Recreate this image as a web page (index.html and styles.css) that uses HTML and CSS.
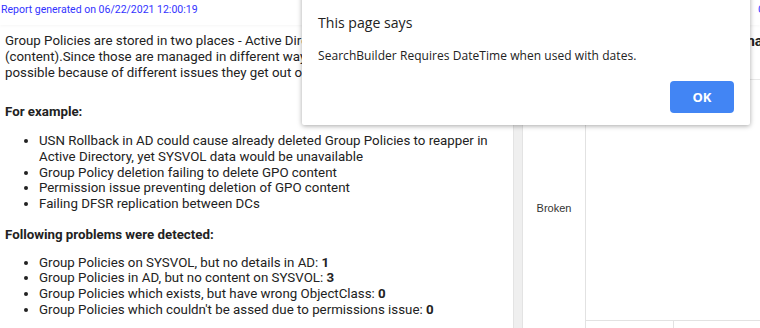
FILE: index.html
```html
<!DOCTYPE html>
<html lang="en">
<head>
  <meta charset="UTF-8">
  <title>GPO Broken Report</title>
  <link rel="stylesheet" href="styles.css">
</head>
<body>
  <div class="topbar">
    <span class="report">Report generated on 06/22/2021 12:00:19</span>
    <span class="report">Contact</span>
  </div>

  <div class="main">
    <section class="panel left">
      <p class="intro">
        Group Policies are stored in two places - Active Directory (metadata) and SYSVOL
        (content).Since those are managed in different ways, replicated in different ways it's
        possible because of different issues they get out of sync.
      </p>
      <p class="label">For example:</p>
      <ul>
        <li>USN Rollback in AD could cause already deleted Group Policies to reapper in Active Directory, yet SYSVOL data would be unavailable</li>
        <li>Group Policy deletion failing to delete GPO content</li>
        <li>Permission issue preventing deletion of GPO content</li>
        <li>Failing DFSR replication between DCs</li>
      </ul>
      <p class="label second">Following problems were detected:</p>
      <ul>
        <li>Group Policies on SYSVOL, but no details in AD: <b>1</b></li>
        <li>Group Policies in AD, but no content on SYSVOL: <b>3</b></li>
        <li>Group Policies which exists, but have wrong ObjectClass: <b>0</b></li>
        <li>Group Policies which couldn't be assed due to permissions issue: <b>0</b></li>
      </ul>
    </section>

    <div class="splitter"></div>

    <section class="panel right">
      <h2 class="card-title">Group Policy Analysis</h2>
      <div class="grid">
        <div class="cell status">Broken</div>
        <div class="cell chart"></div>
        <div class="cell blank"></div>
        <div class="cell foot"></div>
        <div class="cell foot"></div>
      </div>
    </section>
  </div>

  <div class="dialog">
    <div class="dialog-title">This page says</div>
    <div class="dialog-text">SearchBuilder Requires DateTime when used with dates.</div>
    <div class="dialog-actions">
      <button type="button">OK</button>
    </div>
  </div>
</body>
</html>
```

FILE: styles.css
```css
html, body {
  overflow: hidden;
}
body {
  margin: 0;
  width: 760px;
  height: 328px;
  font-family: Roboto, 'Liberation Sans', sans-serif;
  color: #222;
  background: #fff;
}
.topbar {
  display: grid;
  grid-template-columns: 757px 1fr;
  height: 25px;
  box-shadow: 0 1px 3px rgba(0, 0, 0, 0.04);
  position: relative;
}
.report {
  font-size: 10.5px;
  line-height: 20px;
  color: #3333ff;
  padding-left: 1px;
  white-space: nowrap;
}
.main {
  display: flex;
  margin-top: 2px;
  height: 301px;
}
.panel {
  background: #fff;
  overflow: hidden;
}
.left {
  width: 513px;
  padding: 6px 0 0 5px;
  box-sizing: border-box;
  font-size: 13.3px;
  line-height: 15.75px;
}
.left p {
  margin: 0;
}
.intro {
  width: 500px;
}
.left .label {
  font-weight: bold;
  margin-top: 24px;
}
.left .label.second {
  margin-top: 15px;
}
.left ul {
  margin: 13px 0 0;
  padding-left: 34px;
}
.left .second + ul {
  margin-top: 12px;
}
.splitter {
  width: 10px;
  background: #efefef;
  border-left: 1px solid #e3e3e3;
  border-right: 1px solid #e3e3e3;
  box-sizing: border-box;
}
.right {
  flex: 1;
  display: flex;
  flex-direction: column;
}
.card-title {
  margin: 0;
  padding: 5px 0 0 124px;
  height: 53px;
  box-sizing: border-box;
  font-size: 15px;
  line-height: 18px;
  white-space: nowrap;
  border-bottom: 1px solid #e8e8e8;
}
.grid {
  display: grid;
  grid-template-columns: 62px 88px 1fr;
  grid-template-rows: 241px 1fr;
  flex: 1;
}
.cell {
  font-family: Arial, 'Liberation Sans', sans-serif;
  font-size: 11px;
  color: #333;
}
.status {
  display: flex;
  align-items: center;
  justify-content: center;
  padding-top: 14px;
}
.chart {
  grid-column: 2 / 4;
  border-left: 1px solid #e2e2e2;
  border-bottom: 1px solid #e2e2e2;
}
.foot {
  border-left: 1px solid #e2e2e2;
}
.dialog {
  position: absolute;
  left: 302px;
  top: -8px;
  width: 448px;
  height: 133px;
  box-sizing: border-box;
  padding: 20px 16px 0 16px;
  background: #fff;
  border-radius: 2px;
  box-shadow: 0 1px 5px rgba(0, 0, 0, 0.35);
  font-family: 'Open Sans', 'Noto Sans', sans-serif;
  color: #222;
}
.dialog-title {
  font-size: 14.1px;
  line-height: 22px;
}
.dialog-text {
  font-size: 12px;
  line-height: 16px;
  margin-top: 14px;
  letter-spacing: 0.05px;
}
.dialog-actions {
  display: flex;
  justify-content: flex-end;
  margin-top: 17px;
}
button {
  width: 64px;
  height: 32px;
  border: none;
  border-radius: 4px;
  background: #4285f4;
  color: #fff;
  font-family: 'Open Sans', 'Noto Sans', sans-serif;
  font-weight: bold;
  font-size: 13px;
  cursor: pointer;
}
```
